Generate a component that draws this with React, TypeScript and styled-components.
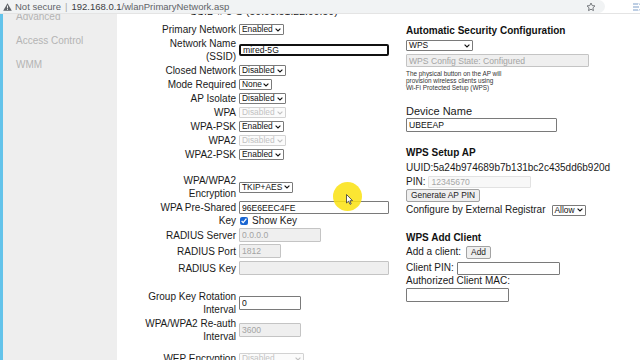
import React from 'react';
import styled, { createGlobalStyle } from 'styled-components';

const Global = createGlobalStyle`
  html, body { margin: 0; padding: 0; background: #fff; }
  body { font-family: "Liberation Sans", Arial, sans-serif; }
  * { box-sizing: border-box; }
`;

const Screen = styled.div`
  position: relative;
  width: 640px;
  height: 360px;
  overflow: hidden;
  display: flex;
  flex-direction: column;
  background: #fff;
  color: #1a1a1a;
`;

/* ---------- browser bar ---------- */
const Toolbar = styled.div`
  flex: none;
  height: 14px;
  display: flex;
  align-items: center;
  background: #fff;
  border-bottom: 1px solid #e4e4e4;
`;

const Omnibox = styled.div`
  flex: 1;
  height: 13px;
  margin-right: 27px;
  display: flex;
  align-items: center;
  gap: 3px;
  padding-left: 3px;
  padding-right: 9px;
  background: #f1f3f4;
  border-radius: 0 7px 7px 0;
  font-size: 9.5px;
  white-space: nowrap;
`;

const Muted = styled.span`
  color: #5f6368;
`;

const Sep = styled.span`
  color: #a8a8a8;
  margin: 0 1px;
`;

const Host = styled.span`
  color: #3c4043;
`;

const Grow = styled.span`
  flex: 1;
`;

const ExtIcon = styled.div`
  width: 12px;
  height: 12px;
  display: flex;
  align-items: center;
  margin-left: auto;
  margin-right: -4px;
`;

/* ---------- page ---------- */
const Page = styled.div`
  flex: 1;
  min-height: 0;
  display: flex;
  overflow: hidden;
`;

const Sidebar = styled.nav`
  flex: none;
  width: 117px;
  background: #eeeeee;
  border-left: 3px solid #63c3ea;
  overflow: hidden;
`;

const MenuList = styled.ul`
  list-style: none;
  margin: -9px 0 0;
  padding: 0;
`;

const MenuItem = styled.li`
  height: 24px;
  line-height: 24px;
  padding-left: 13px;
  font-size: 10px;
  color: #b4b4b4;
`;

const Main = styled.main`
  flex: 1;
  min-width: 0;
  overflow: hidden;
`;

const SectionTitle = styled.div`
  height: 13px;
  margin-top: -9px;
  padding-left: 73px;
  font-size: 10.5px;
  line-height: 13px;
  color: #222;
  white-space: nowrap;
`;

const Columns = styled.div`
  margin-top: 5px;
  display: grid;
  grid-template-columns: 289px 1fr;
`;

/* ---------- left form ---------- */
const FormGrid = styled.div`
  display: grid;
  grid-template-columns: 119px auto;
  column-gap: 3px;
  row-gap: 1px;
  align-items: center;
`;

const Label = styled.div`
  text-align: right;
  font-size: 10px;
  line-height: 13px;
  color: #1a1a1a;
  white-space: nowrap;
`;

const Cell = styled.div<{ $pad?: number }>`
  display: flex;
  align-items: center;
  padding: ${p => p.$pad ?? 0}px 0;
`;

const StackCell = styled.div`
  display: flex;
  flex-direction: column;
  align-items: flex-start;
  align-self: start;
`;

const Spacer = styled.div<{ $h: number }>`
  grid-column: 1 / -1;
  height: ${p => p.$h}px;
`;

const SelectBox = styled.div<{ $w: number; $disabled?: boolean }>`
  width: ${p => p.$w}px;
  height: 11px;
  display: flex;
  align-items: center;
  justify-content: space-between;
  padding: 0 2px;
  border: 1px solid ${p => (p.$disabled ? '#d2d2d2' : '#7a7a7a')};
  border-radius: 1px;
  background: ${p => (p.$disabled ? '#fbfbfb' : '#fff')};
  color: ${p => (p.$disabled ? '#c2c2c2' : '#111')};
  font-size: 8.4px;
  line-height: 1;
  white-space: nowrap;
`;

const Field = styled.input<{ $w: number; $h: number; $focus?: boolean; $soft?: boolean }>`
  width: ${p => p.$w}px;
  height: ${p => p.$h}px;
  padding: 0 2px;
  margin: 0;
  font-family: inherit;
  font-size: 8.6px;
  color: #111;
  background: ${p => (p.$soft ? '#f8f8f8' : '#fff')};
  border: ${p => (p.$focus ? '2px solid #111' : p.$soft ? '1px solid #e2e2e2' : '1px solid #7a7a7a')};
  border-radius: ${p => (p.$focus ? 2 : 1)}px;
  outline: none;
  &::placeholder { color: #a6a6a6; }
  &:disabled {
    background: #efefef;
    border-color: #c4c4c4;
    color: #a4a4a4;
  }
`;

const CheckRow = styled.label`
  height: 13px;
  display: flex;
  align-items: center;
  gap: 4px;
  padding-left: 1px;
  font-size: 10px;
  color: #1a1a1a;
`;

const Check = styled.input`
  width: 8px;
  height: 8px;
  margin: 0;
  accent-color: #1a66d2;
`;

/* ---------- right column ---------- */
const RightCol = styled.div`
  display: flex;
  flex-direction: column;
  align-items: flex-start;
  font-size: 10px;
  color: #1a1a1a;
`;

const Heading = styled.div<{ $mt?: number }>`
  margin-top: ${p => p.$mt ?? 0}px;
  font-size: 10px;
  font-weight: bold;
  line-height: 14px;
  color: #111;
  white-space: nowrap;
`;

const BigLabel = styled.div<{ $mt?: number }>`
  margin-top: ${p => p.$mt ?? 0}px;
  font-size: 11px;
  line-height: 14px;
  color: #1a1a1a;
`;

const Line = styled.div<{ $mt?: number; $gap?: number }>`
  margin-top: ${p => p.$mt ?? 0}px;
  height: 14px;
  display: flex;
  align-items: center;
  gap: ${p => p.$gap ?? 4}px;
  white-space: nowrap;
  line-height: 14px;
`;

const Gap = styled.div<{ $h: number }>`
  height: ${p => p.$h}px;
`;

const Note = styled.div`
  margin-top: 3px;
  font-size: 6.4px;
  line-height: 7px;
  color: #333;
`;

const Btn = styled.button<{ $mt?: number }>`
  margin-top: ${p => p.$mt ?? 0}px;
  height: 13px;
  padding: 0 4px;
  font-family: inherit;
  font-size: 8.4px;
  line-height: 1;
  color: #222;
  background: #efefef;
  border: 1px solid #a3a3a3;
  border-radius: 2px;
`;

/* ---------- overlays ---------- */
const Highlight = styled.div`
  position: absolute;
  left: 333px;
  top: 182px;
  width: 29px;
  height: 29px;
  border-radius: 50%;
  background: rgba(250, 226, 18, 0.86);
`;

const Pointer = styled.svg`
  position: absolute;
  left: 346px;
  top: 194px;
`;

const Chevron = () => (
  <svg width="6" height="4" viewBox="0 0 6 4">
    <path d="M0.6 0.6 L3 3 L5.4 0.6" stroke="currentColor" fill="none" strokeWidth="1.1" />
  </svg>
);

const Select = ({ value, w, disabled }: { value: string; w: number; disabled?: boolean }) => (
  <SelectBox $w={w} $disabled={disabled}>
    <span>{value}</span>
    <Chevron />
  </SelectBox>
);

export default function App() {
  return (
    <Screen>
      <Global />
      <Toolbar>
        <Omnibox>
          <svg width="9" height="8" viewBox="0 0 9 8">
            <path d="M4.5 0.3 L8.8 7.7 L0.2 7.7 Z" fill="#5f6368" />
            <rect x="4.05" y="2.6" width="0.9" height="2.8" fill="#fff" />
            <rect x="4.05" y="6" width="0.9" height="0.9" fill="#fff" />
          </svg>
          <Muted>Not secure</Muted>
          <Sep>|</Sep>
          <span>
            <Host>192.168.0.1</Host>
            <Muted>/wlanPrimaryNetwork.asp</Muted>
          </span>
          <Grow />
          <svg width="10" height="10" viewBox="0 0 24 24" fill="none" stroke="#5f6368" strokeWidth="2" strokeLinejoin="round">
            <path d="M12 2.5 L14.9 8.6 L21.5 9.4 L16.6 14 L17.9 20.6 L12 17.3 L6.1 20.6 L7.4 14 L2.5 9.4 L9.1 8.6 Z" />
          </svg>
        </Omnibox>
        <ExtIcon>
          <svg width="12" height="10" viewBox="0 0 12 10" fill="none" stroke="#7d9ec9" strokeWidth="1">
            <path d="M1 2 H6 M1 5 H7 M1 8 H6" />
            <path d="M7 1.5 L10.5 5 L7 8.5" />
          </svg>
        </ExtIcon>
      </Toolbar>

      <Page>
        <Sidebar>
          <MenuList>
            <MenuItem>Advanced</MenuItem>
            <MenuItem>Access Control</MenuItem>
            <MenuItem>WMM</MenuItem>
          </MenuList>
        </Sidebar>

        <Main>
          <SectionTitle>SSID # 5 G (50:95:51:22:99:50)</SectionTitle>
          <Columns>
            <FormGrid>
              <Label>Primary Network</Label>
              <Cell><Select value="Enabled" w={45} /></Cell>

              <Label>Network Name<br />(SSID)</Label>
              <Cell><Field $w={150} $h={12} $focus defaultValue="mired-5G" readOnly /></Cell>

              <Label>Closed Network</Label>
              <Cell><Select value="Disabled" w={47} /></Cell>

              <Label>Mode Required</Label>
              <Cell><Select value="None" w={33} /></Cell>

              <Label>AP Isolate</Label>
              <Cell><Select value="Disabled" w={47} /></Cell>

              <Label>WPA</Label>
              <Cell><Select value="Disabled" w={47} disabled /></Cell>

              <Label>WPA-PSK</Label>
              <Cell><Select value="Enabled" w={45} /></Cell>

              <Label>WPA2</Label>
              <Cell><Select value="Disabled" w={47} disabled /></Cell>

              <Label>WPA2-PSK</Label>
              <Cell><Select value="Enabled" w={45} /></Cell>

              <Spacer $h={11} />

              <Label>WPA/WPA2<br />Encryption</Label>
              <Cell><Select value="TKIP+AES" w={54} /></Cell>

              <Label>WPA Pre-Shared<br />Key</Label>
              <StackCell>
                <Field $w={150} $h={13} defaultValue="96E6EEC4FE" readOnly />
                <CheckRow>
                  <Check type="checkbox" defaultChecked />
                  Show Key
                </CheckRow>
              </StackCell>

              <Label>RADIUS Server</Label>
              <Cell><Field $w={82} $h={14} defaultValue="0.0.0.0" disabled /></Cell>

              <Label>RADIUS Port</Label>
              <Cell $pad={1}><Field $w={42} $h={14} defaultValue="1812" disabled /></Cell>

              <Label>RADIUS Key</Label>
              <Cell $pad={1}><Field $w={150} $h={14} defaultValue="" disabled /></Cell>

              <Spacer $h={12} />

              <Label>Group Key Rotation<br />Interval</Label>
              <Cell><Field $w={62} $h={14} defaultValue="0" readOnly /></Cell>

              <Label>WPA/WPA2 Re-auth<br />Interval</Label>
              <Cell><Field $w={62} $h={14} defaultValue="3600" disabled /></Cell>

              <Spacer $h={7} />

              <Label>WEP Encryption</Label>
              <Cell><Select value="Disabled" w={65} disabled /></Cell>
            </FormGrid>

            <RightCol>
              <Heading $mt={1}>Automatic Security Configuration</Heading>
              <Gap $h={2} />
              <Select value="WPS" w={67} />
              <Gap $h={3} />
              <Field $w={183} $h={13} defaultValue="WPS Config State: Configured" disabled />
              <Note>
                The physical button on the AP will<br />
                provision wireless clients using<br />
                Wi-Fi Protected Setup (WPS)
              </Note>

              <BigLabel $mt={13}>Device Name</BigLabel>
              <Field $w={151} $h={14} defaultValue="UBEEAP" readOnly />

              <Heading $mt={14}>WPS Setup AP</Heading>
              <Line $mt={1}>UUID:5a24b974689b7b131bc2c435dd6b920d</Line>
              <Line $gap={3}>
                PIN:
                <Field $w={103} $h={12} $soft placeholder="12345670" readOnly />
              </Line>
              <Btn>Generate AP PIN</Btn>
              <Line $mt={1} $gap={6}>
                Configure by External Registrar
                <Select value="Allow" w={34} />
              </Line>

              <Heading $mt={14}>WPS Add Client</Heading>
              <Line $gap={5}>
                Add a client:
                <Btn>Add</Btn>
              </Line>
              <Line $mt={2} $gap={3}>
                Client PIN:
                <Field $w={103} $h={13} readOnly />
              </Line>
              <Line $mt={-1}>Authorized Client MAC:</Line>
              <Field $w={103} $h={14} readOnly />
            </RightCol>
          </Columns>
        </Main>
      </Page>

      <Highlight />
      <Pointer width="7" height="11" viewBox="0 0 7 11">
        <path d="M0.5 0.5 L0.5 9 L2.6 7.2 L4 10.3 L5.2 9.8 L3.9 6.8 L6.5 6.6 Z" fill="#fff" stroke="#333" strokeWidth="0.8" />
      </Pointer>
    </Screen>
  );
}
